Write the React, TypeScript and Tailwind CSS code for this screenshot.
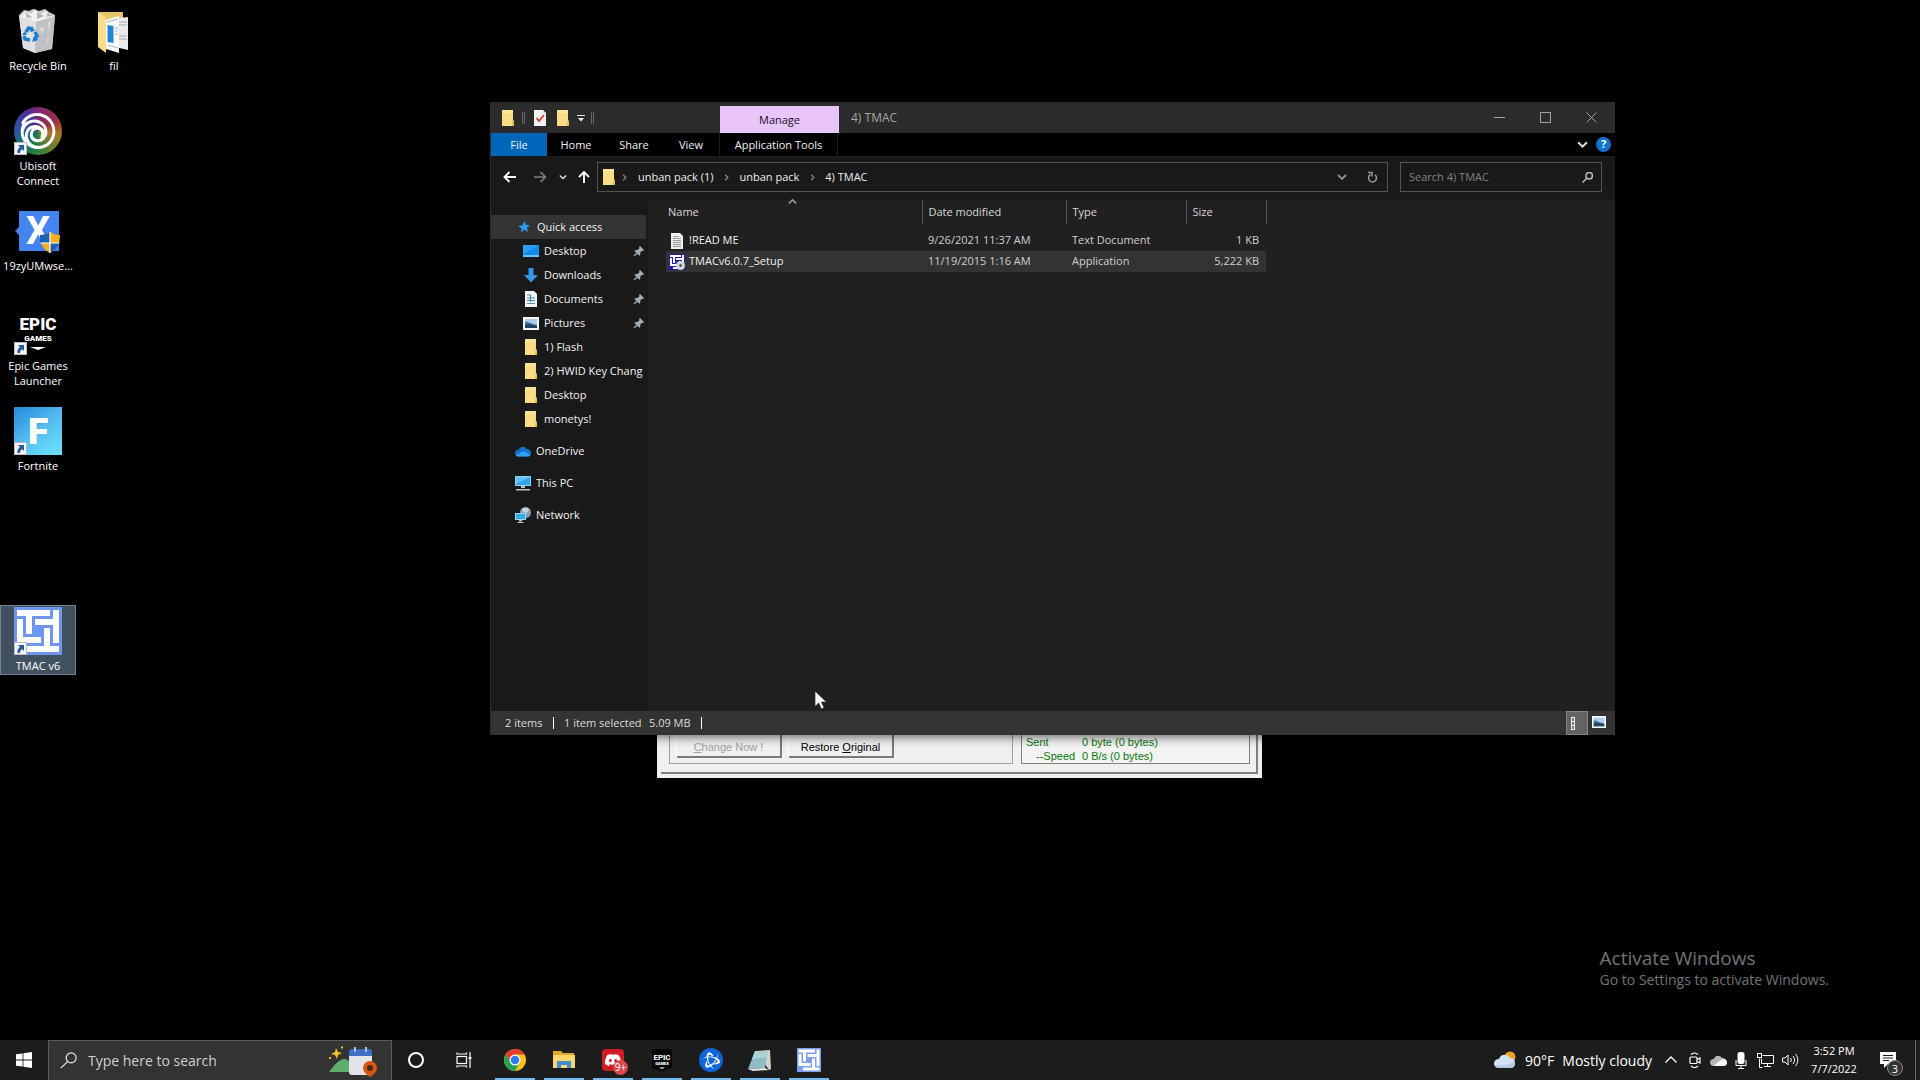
import type { ReactNode } from "react";
import { SiBattledotnet, SiDiscord, SiUbisoft } from "react-icons/si";

/* ---------- shared icons ---------- */

function FolderIcon() {
  return (
    <svg width="16" height="16" viewBox="0 0 16 16" className="shrink-0">
      <path d="M2 0h11v10l1 1v5H2z" fill="#f9dc83" />
      <path d="M2 0h11v3H2z" fill="#fbe59c" />
      <path d="M12.5 10.5 14 11v5h-2z" fill="#e3b94d" />
    </svg>
  );
}

function TmacLogo({ size, bg }: { size: number; bg: string }) {
  return (
    <svg width={size} height={size} viewBox="0 0 48 48" className="shrink-0">
      <rect width="48" height="48" fill={bg} />
      <path
        fill="#fff"
        d="M3 3h33v6H3zM39 3h6v33h-6zM21 12h20v6H21zM12 9h6v18h-6zM3 12h6v24H3zM3 30h24v6H3zM30 21h6v18h-6zM12 39h33v6H12z"
      />
    </svg>
  );
}

function Chevron({ dir, color = "#fff", size = 8 }: { dir: "up" | "down" | "right"; color?: string; size?: number }) {
  const paths = {
    up: "M1 6 5 2l4 4",
    down: "M1 3l4 4 4-4",
    right: "M3 1l4 4-4 4",
  };
  return (
    <svg width={size} height={size} viewBox="0 0 10 10" fill="none" stroke={color} strokeWidth="1.8">
      <path d={paths[dir]} />
    </svg>
  );
}

function PinIcon() {
  return (
    <svg width="12" height="12" viewBox="0 0 12 12" className="shrink-0">
      <path d="M7 1l4 4-1 1-1-.2-1.800 2 .1 2-1 1L1.500 6l1-1 2 .1 2-1.800L6 2z" fill="#a3adb5" />
      <path d="M4 8 1 11" stroke="#a3adb5" strokeWidth="1.300" />
    </svg>
  );
}

function PictureIcon({ small }: { small?: boolean }) {
  return (
    <svg width={small ? 14 : 16} height={small ? 12 : 13} viewBox="0 0 16 13" preserveAspectRatio="none" className="shrink-0">
      <rect width="16" height="13" fill="#f4f6f8" />
      <rect x="2" y="2" width="12" height="9" fill="#a9cdee" />
      <path d="M2 5c3-1 5 2 12 3v3H2z" fill="#3f6f9e" />
      <path d="M2 8c4-1 8 0 12 1v2H2z" fill="#23405c" />
    </svg>
  );
}

function SearchGlyph({ size, color, width }: { size: number; color: string; width: number }) {
  return (
    <svg width={size} height={size} viewBox="0 0 16 16" fill="none" stroke={color} strokeWidth={width}>
      <circle cx="10.500" cy="5.500" r="4.700" />
      <path d="M7 9 .8 15.200" />
    </svg>
  );
}

/* ---------- desktop ---------- */

function ShortcutArrow() {
  return (
    <svg width="13" height="13" viewBox="0 0 13 13" className="absolute bottom-0 left-0">
      <rect width="13" height="13" fill="#b9bcc0" />
      <rect x="1" y="1" width="11" height="11" fill="#f5f6f8" />
      <path d="M4 3h6v6L8.200 7.200C6.500 8.300 6 9.500 6 11H3.500C3 8.500 4 6.500 5.900 5z" fill="#2d5a9e" />
    </svg>
  );
}

function RecycleBin() {
  return (
    <svg width="48" height="48" viewBox="0 0 48 48">
      <path d="M5 8l5-5 5 1 4-2 6 2 6-2 4 3 6 3-3 34-17 4-12-5z" fill="#c6c8ca" />
      <path d="M6 10l5-6 6 3 4-5 5 5 6-3 8 6-8 5-21-1z" fill="#eff1f2" />
      <path d="M5 9l17 6-1 31-12-5z" fill="#dfe1e3" />
      <path d="M22 15l19-6-3 33-17 4z" fill="#bfc1c4" />
      <path d="M11 5l7 5-5 1zM23 5l7 4-7 3zM34 5l4 4-6 1z" fill="#b2b5b8" />
      <path d="M34 15l3-1-2 12zM26 21l4-1-2 8zM33 31l2 0-2 6z" fill="#d7d9db" />
      <g fill="none" stroke="#1c7fd0" strokeWidth="3.500">
        <path d="M12 25l2.500-4 4 1M21 25l2 4-3 4M16 33l-5-1-1-3" />
      </g>
      <path d="M18 19l3 5-5 1zM20 29l-2 6 6-2zM8 28l3-4 2 4z" fill="#1c7fd0" />
    </svg>
  );
}

function FilFolder() {
  return (
    <svg width="48" height="48" viewBox="0 0 48 48">
      <path d="M8 5h25v33H8z" fill="#e8c56b" />
      <path d="M20 12l18-2v33l-13-3z" fill="#e9ebed" />
      <path d="M28 15h9M28 18h9M29 29h8M29 32h8" stroke="#a7aaad" />
      <path d="M16 13l13-4v37l-13-4z" fill="#fafafa" />
      <path d="M17.500 18l6 1v17l-6-1z" fill="#1f86d8" />
      <path d="M17 15l11-3M25 21h3M25 24h3M25 27h3M18 38l10 3" stroke="#a9b5c0" />
      <path d="M8 5l8 6v35l-8-6z" fill="#f8dc8c" />
    </svg>
  );
}

function UbisoftIcon() {
  return (
    <div className="flex size-12 items-center justify-center rounded-full bg-[conic-gradient(#7c2878,#9a3040_60deg,#a87a28_100deg,#5a8030_150deg,#208040_190deg,#1c6a80_240deg,#2a55a0_280deg,#45309a_325deg,#7c2878)]">
      <SiUbisoft size={36} color="#fff" />
    </div>
  );
}

function XSetupIcon() {
  return (
    <svg width="48" height="48" viewBox="0 0 48 48">
      <path d="M1 24l4-4v8z" fill="#6a62d8" />
      <path d="M5 4h40v40H5V28l-2-4 2-4z" fill="#4484ee" />
      <text x="24" y="37" fontSize="38" fontWeight="700" fontFamily="Roboto" textAnchor="middle" fill="#fff">
        X
      </text>
      <path d="M36 25c3 2 6 3 10 3 0 9-3 14-10 18-7-4-10-9-10-18 4 0 7-1 10-3z" fill="#f6b01e" />
      <path d="M36 25c-3 2-6 3-10 3v8h10zM36 36v10c5-3 8-6 9-10z" fill="#1d62b0" />
      <path d="M36 25v21M26.500 36h19" stroke="#fff" strokeWidth="1.200" />
    </svg>
  );
}

function EpicMark() {
  return (
    <svg width="48" height="48" viewBox="0 0 48 48">
      <g fill="#fff" fontFamily="Roboto" textAnchor="middle">
        <text x="24" y="23" fontSize="17" fontWeight="900">EPIC</text>
        <text x="24" y="34" fontSize="8" fontWeight="900">GAMES</text>
      </g>
      <path d="M16 40h16l-8 3z" fill="#fff" />
    </svg>
  );
}

function FortniteIcon() {
  return (
    <svg width="48" height="48" viewBox="0 0 48 48">
      <defs>
        <linearGradient id="fn" x1="0" y1="0" x2="0.700" y2="1">
          <stop offset="0" stopColor="#2489dc" />
          <stop offset="0.600" stopColor="#56c0f0" />
          <stop offset="1" stopColor="#66dcfa" />
        </linearGradient>
      </defs>
      <rect width="48" height="48" fill="url(#fn)" />
      <text x="24" y="37" fontSize="37" fontWeight="900" fontFamily="Roboto" textAnchor="middle" fill="#fff">
        F
      </text>
    </svg>
  );
}

type Shortcut = {
  label: string;
  icon: ReactNode;
  place: string;
  arrow?: boolean;
  selected?: boolean;
};

const shortcuts: Shortcut[] = [
  { label: "Recycle Bin", icon: <RecycleBin />, place: "col-start-1 row-start-1" },
  { label: "fil", icon: <FilFolder />, place: "col-start-2 row-start-1" },
  { label: "Ubisoft Connect", icon: <UbisoftIcon />, place: "col-start-1 row-start-2", arrow: true },
  { label: "19zyUMwse...", icon: <XSetupIcon />, place: "col-start-1 row-start-3" },
  { label: "Epic Games Launcher", icon: <EpicMark />, place: "col-start-1 row-start-4", arrow: true },
  { label: "Fortnite", icon: <FortniteIcon />, place: "col-start-1 row-start-5", arrow: true },
  {
    label: "TMAC v6",
    icon: <TmacLogo size={48} bg="#6f96ee" />,
    place: "col-start-1 row-start-7",
    arrow: true,
    selected: true,
  },
];

function DesktopIcons() {
  return (
    <div className="grid auto-rows-[100px] grid-cols-[76px_76px] items-start pt-[5px]">
      {shortcuts.map((s) => (
        <button
          key={s.label}
          className={`${s.place} flex flex-col items-center border pt-px pb-px ${
            s.selected ? "border-[#74828f] bg-[#42515f]" : "border-transparent"
          }`}
        >
          <span className="relative block size-12">
            {s.icon}
            {s.arrow && <ShortcutArrow />}
          </span>
          <span className="mt-[3px] text-[11px] leading-[15px] text-white">{s.label}</span>
        </button>
      ))}
    </div>
  );
}

/* ---------- TMAC window ---------- */

function TmacWindow() {
  const button =
    "h-6 w-[105px] border-r-2 border-b-2 border-[#7a7a7a] bg-[#f0f0f0] pt-1 text-[11px] shadow-[-1px_-1px_0_#fff]";
  return (
    <section className="absolute top-[700px] left-[657px] w-[605px] bg-[#f0f0f0] px-1 pb-1 font-['Liberation_Sans',sans-serif] text-[11px]">
      <div className="flex border-r-2 border-b-2 border-[#808080] pr-1.5 pb-2 pl-2">
        <div className="flex h-16 w-[344px] items-end gap-[7px] border border-[#a0a0a0] pb-[5px] pl-[7px]">
          <button disabled className={`${button} text-[#a0a0a0]`}>
            <u>C</u>hange Now !
          </button>
          <button className={`${button} text-black`}>
            Restore <u>O</u>riginal
          </button>
        </div>
        <div className="ml-2 flex h-16 flex-1 flex-col justify-end border border-[#808080] bg-[#f4f4f4] pl-1 leading-[14px] text-[#0a780a]">
          <div className="flex">
            <span className="w-14">Sent</span>
            <span>0 byte (0 bytes)</span>
          </div>
          <div className="flex">
            <span className="w-14 pl-2.5">--Speed</span>
            <span>0 B/s (0 bytes)</span>
          </div>
        </div>
      </div>
    </section>
  );
}

/* ---------- explorer ---------- */

function TitleBar() {
  return (
    <div className="flex h-[31px] bg-[#2b2b2b]">
      <div className="flex w-[229px] items-center pl-[9px]">
        <FolderIcon />
        <span className="ml-1.5 h-3 w-[3px] border-x border-[#666]" />
        <button aria-label="Properties" className="ml-2">
          <svg width="14" height="16" viewBox="0 0 14 16">
            <path d="M1 0h9l3 3v13H1z" fill="#f4f4f4" />
            <path d="M3.500 8l2.500 3 5-6" fill="none" stroke="#d8412f" strokeWidth="1.800" />
          </svg>
        </button>
        <button aria-label="New folder" className="ml-2">
          <FolderIcon />
        </button>
        <button aria-label="Customize Quick Access Toolbar" className="ml-1.5">
          <svg width="8" height="8" viewBox="0 0 8 8" fill="#eee">
            <path d="M0 1h8v1H0zM1 4h6L4 7.500z" />
          </svg>
        </button>
        <span className="ml-1.5 h-3 w-[3px] border-x border-[#666]" />
      </div>
      <div className="mt-1 flex w-[119px] items-center justify-center bg-[#e9c6fa] pt-px text-[#1a1022]">Manage</div>
      <div className="flex-1 self-center pl-3 text-[12px] text-[#a6a6a6]">4) TMAC</div>
      {["Minimize", "Maximize", "Close"].map((name) => (
        <button key={name} aria-label={name} className="flex w-[46px] items-center justify-center pr-px">
          <svg width="11" height="11" viewBox="0 0 11 11" fill="none" stroke="#a0a0a0">
            {name === "Minimize" && <path d="M0 5.500h11" />}
            {name === "Maximize" && <rect x=".5" y=".5" width="10" height="10" />}
            {name === "Close" && <path d="M.5.5l10 10M10.500.5l-10 10" />}
          </svg>
        </button>
      ))}
    </div>
  );
}

function RibbonTabs() {
  return (
    <div className="flex h-[23px] bg-black text-[#f0f0f0]">
      <button className="w-14 bg-[#0067b8] pt-px">File</button>
      <button className="w-[58px] pt-px">Home</button>
      <button className="w-[58px] pt-px">Share</button>
      <button className="w-[56px] pt-px">View</button>
      <button className="w-[119px] border-x border-[#1c1c1c] pt-px">Application Tools</button>
      <div className="flex flex-1 items-center justify-end gap-2 pr-1">
        <button aria-label="Expand the Ribbon">
          <Chevron dir="down" size={11} color="#ddd" />
        </button>
        <button
          aria-label="Help"
          className="flex size-[15px] items-center justify-center rounded-full bg-[#1273cc] text-[11px] font-bold text-white"
        >
          ?
        </button>
      </div>
    </div>
  );
}

function AddressRow() {
  return (
    <div className="flex items-center pt-1.5 pr-[13px]">
      <div className="flex w-[106px] items-center pl-3">
        <button aria-label="Back">
          <svg width="14" height="12" viewBox="0 0 14 12" fill="none" stroke="#fff" strokeWidth="1.900">
            <path d="M13 6H2M6.500 1l-5 5 5 5" />
          </svg>
        </button>
        <button aria-label="Forward" className="ml-4">
          <svg width="14" height="12" viewBox="0 0 14 12" fill="none" stroke="#808080" strokeWidth="1.600">
            <path d="M1 6h11M7.500 1l5 5-5 5" />
          </svg>
        </button>
        <button aria-label="Recent locations" className="ml-3">
          <Chevron dir="down" color="#ddd" size={8} />
        </button>
        <button aria-label="Up" className="ml-[11px]">
          <svg width="12" height="14" viewBox="0 0 12 14" fill="none" stroke="#fff" strokeWidth="1.900">
            <path d="M6 13V2M1 7l5-5 5 5" />
          </svg>
        </button>
      </div>
      <div className="flex h-[30px] flex-1 items-center border border-[#535353] pl-[3px] text-[#eee]">
        <FolderIcon />
        {["unban pack (1)", "unban pack", "4) TMAC"].map((crumb, i) => (
          <span key={crumb} className="flex items-center">
            <span className={i === 0 ? "mr-2.5 ml-1" : "mr-[9px] ml-2.5"}>
              <Chevron dir="right" color="#888" size={7} />
            </span>
            <button>{crumb}</button>
          </span>
        ))}
        <span className="flex-1" />
        <button aria-label="Previous locations" className="mr-5">
          <Chevron dir="down" color="#909090" size={10} />
        </button>
        <button aria-label="Refresh" className="mr-[9px]">
          <svg width="11" height="12" viewBox="0 0 11 12" fill="none" stroke="#999" strokeWidth="1.500">
            <path d="M3.500 3.500A4 4 0 1 0 8 3.800M1 1.500h4v4" />
          </svg>
        </button>
      </div>
      <div className="ml-3 flex h-[30px] w-[202px] items-center border border-[#535353] pr-2">
        <input
          type="text"
          aria-label="Search 4) TMAC"
          placeholder="Search 4) TMAC"
          className="min-w-0 flex-1 bg-transparent pl-2 text-[11px] outline-none placeholder:text-[#808080]"
        />
        <SearchGlyph size={11} color="#bbb" width={2.2} />
      </div>
    </div>
  );
}

const pinned: { label: string; icon: ReactNode; pin?: boolean }[] = [
  {
    label: "Desktop",
    pin: true,
    icon: (
      <svg width="16" height="12" viewBox="0 0 16 12">
        <rect width="16" height="12" fill="#0f8ae6" />
        <path d="M0 10h16v2H0z" fill="#6cc4ff" />
        <path d="M0 0h16L0 9z" fill="#27a0f5" />
      </svg>
    ),
  },
  {
    label: "Downloads",
    pin: true,
    icon: (
      <svg width="16" height="16" viewBox="0 0 16 16">
        <path d="M5.500 1h5v7H15l-7 7.500L1 8h4.500z" fill="#3494e6" />
      </svg>
    ),
  },
  {
    label: "Documents",
    pin: true,
    icon: (
      <svg width="16" height="16" viewBox="0 0 16 16">
        <path d="M2 0h9l3 3v13H2z" fill="#f2f5f7" />
        <path d="M4 4h4M4 7h8M4 9.500h8M4 12.500h8" stroke="#4f8fb5" />
        <path d="M7 4h1v7H7z" fill="#2f7da8" />
      </svg>
    ),
  },
  { label: "Pictures", pin: true, icon: <PictureIcon /> },
  { label: "1) Flash", icon: <FolderIcon /> },
  { label: "2) HWID Key Chang", icon: <FolderIcon /> },
  { label: "Desktop", icon: <FolderIcon /> },
  { label: "monetys!", icon: <FolderIcon /> },
];

const places: { label: string; icon: ReactNode }[] = [
  {
    label: "OneDrive",
    icon: (
      <svg width="16" height="11" viewBox="0 0 16 11">
        <path d="M4 3.500C5 .5 9.500-.5 11.500 3 14.500 3 16 5 16 7c0 2-1.500 3.500-3.500 3.500h-9C1.500 10.500 0 9 0 7c0-2 1.500-3.500 4-3.500z" fill="#1572c8" />
        <path d="M1 9l8-4 6.500 4c-.8 1-1.800 1.500-3 1.500h-9C2.500 10.500 1.600 10 1 9z" fill="#2fa0f0" />
      </svg>
    ),
  },
  {
    label: "This PC",
    icon: (
      <svg width="16" height="15" viewBox="0 0 16 15">
        <rect width="16" height="10" fill="#8fd0f2" />
        <rect x="1" y="1" width="14" height="8" fill="#33a4e4" />
        <path d="M1 1h14L1 8z" fill="#62c2f4" />
        <path d="M6 10h4v2H6zM1 13h14v1.500H1z" fill="#b9c4cc" />
      </svg>
    ),
  },
  {
    label: "Network",
    icon: (
      <svg width="16" height="16" viewBox="0 0 16 16">
        <circle cx="10.500" cy="5.500" r="5.500" fill="#7f9fb2" />
        <path d="M7 2c3-2 5-1 7 0l-2 4-4-1z" fill="#c4d5df" />
        <rect y="6" width="11" height="7" fill="#9ad8f8" />
        <rect x="1" y="7" width="9" height="5" fill="#36a7e8" />
        <path d="M4 13h3v1.500H4zM2.500 15h6v1h-6z" fill="#b9c4cc" />
      </svg>
    ),
  },
];

function Sidebar() {
  return (
    <nav className="w-[157px] shrink-0 overflow-hidden whitespace-nowrap text-[#f2f2f2]">
      <button className="mt-[15px] flex h-6 w-[155px] items-center gap-[7px] bg-[#333] pl-[27px]">
        <svg width="12" height="12" viewBox="0 0 12 12">
          <path d="M6.500 0 8 3.800l4 .4-3 2.500 1 4.300-3.600-2.200L3 11.500l.6-4L0 5l4.300-.6z" fill="#2b9bea" />
        </svg>
        Quick access
      </button>
      {pinned.map((item, i) => (
        <button key={i} className="flex h-6 w-full items-center pr-[3px] pl-8 text-left">
          <span className="flex w-[21px] shrink-0">{item.icon}</span>
          <span className="flex-1">{item.label}</span>
          {item.pin && <PinIcon />}
        </button>
      ))}
      {places.map((item) => (
        <button key={item.label} className="mt-2 flex h-6 w-full items-center gap-[5px] pl-6">
          {item.icon}
          {item.label}
        </button>
      ))}
    </nav>
  );
}

const files = [
  { name: "!READ ME", date: "9/26/2021 11:37 AM", type: "Text Document", size: "1 KB" },
  { name: "TMACv6.0.7_Setup", date: "11/19/2015 1:16 AM", type: "Application", size: "5,222 KB", selected: true },
];

function FileList() {
  const head = "border-r border-[#5a5a5a] pl-1.5 font-normal";
  return (
    <div className="flex-1 bg-[#202020] pl-[18px]">
      <table className="w-[600px] table-fixed border-collapse text-left">
        <colgroup>
          <col className="w-[256px]" />
          <col className="w-[144px]" />
          <col className="w-[120px]" />
          <col className="w-[80px]" />
        </colgroup>
        <thead className="text-[#d8d8d8]">
          <tr className="h-6">
            <th className="relative border-r border-[#5a5a5a] pl-0.5 font-normal">
              Name
              <span className="absolute -top-0.5 left-[122px]">
                <Chevron dir="up" color="#999" size={9} />
              </span>
            </th>
            <th className={head}>Date modified</th>
            <th className={head}>Type</th>
            <th className={head}>Size</th>
          </tr>
        </thead>
        <tbody className="text-[#d0d0d0]">
          <tr className="h-1.5" />
          {files.map((f) => (
            <tr key={f.name} className={`h-[21px] ${f.selected ? "bg-[#333]" : ""}`}>
              <td>
                <span className="flex items-center gap-1 pl-[3px] text-[#f0f0f0]">
                  {f.selected ? (
                    <span className="relative">
                      <TmacLogo size={16} bg="#1d1da8" />
                      <svg width="9" height="9" viewBox="0 0 9 9" className="absolute right-0 bottom-0">
                        <circle cx="4.500" cy="4.500" r="4.500" fill="#cfd8d6" />
                        <circle cx="4.500" cy="4.500" r="1.200" fill="#333" />
                      </svg>
                    </span>
                  ) : (
                    <svg width="16" height="16" viewBox="0 0 16 16">
                      <path d="M2 0h9l3 3v13H2z" fill="#f0f0f0" />
                      <path d="M4 3.500h6M4 5.500h8M4 7.500h8M4 9.500h8M4 11.500h8M4 13.500h8" stroke="#9a9a9a" />
                    </svg>
                  )}
                  {f.name}
                </span>
              </td>
              <td className="pl-1.5">{f.date}</td>
              <td className="pl-1.5">{f.type}</td>
              <td className="pr-[7px] text-right">{f.size}</td>
            </tr>
          ))}
        </tbody>
      </table>
    </div>
  );
}

function StatusBar() {
  return (
    <footer className="flex h-6 items-center bg-[#333] pl-3.5 text-[#dcdcdc]">
      <span className="w-12">2 items</span>
      <span className="h-3 w-px bg-white" />
      <span className="ml-2.5 w-[75px] whitespace-nowrap">1 item selected</span>
      <span className="ml-2.5 w-[52px] whitespace-nowrap">5.09 MB</span>
      <span className="h-3 w-px bg-white" />
      <span className="flex-1" />
      <button aria-label="Details view" className="flex h-full w-[22px] items-center border border-[#848484] bg-[#636363] pl-1">
        <svg width="4" height="13" viewBox="0 0 4 13">
          <path d="M0 0h4v13H0z" fill="#f0f0f0" />
          <path d="M1 1h2v3H1zM1 5h2v3H1zM1 9h2v3H1z" fill="#777" />
        </svg>
      </button>
      <button aria-label="Large icons view" className="mr-[9px] mb-0.5 ml-1">
        <PictureIcon small />
      </button>
    </footer>
  );
}

function ExplorerWindow() {
  return (
    <main className="absolute top-[102px] left-[490px] flex h-[633px] w-[1125px] flex-col border-l border-[#2e2e2e] bg-[#191919] text-[11px] shadow-[0_2px_10px_rgba(0,0,0,0.6)]">
      <TitleBar />
      <RibbonTabs />
      <AddressRow />
      <div className="mt-2 flex min-h-0 flex-1">
        <Sidebar />
        <FileList />
      </div>
      <StatusBar />
    </main>
  );
}

/* ---------- taskbar ---------- */

function SearchArt() {
  return (
    <svg width="50" height="32" viewBox="0 0 50 32">
      <path d="M0 27C6 19 11 14 15 14c5 0 8 5 10 13z" fill="#5fae6e" />
      <path d="M7 3l2 4 4 1-4 2-1 4-2-4-4-1 4-2z" fill="#f0c419" />
      <path d="M12 1.500h2v2h-2zM0 12h2v2H0z" fill="#f0c419" />
      <path d="M20 9h23v18a3 3 0 0 1-3 3H23a3 3 0 0 1-3-3z" fill="#e2e4ea" />
      <path d="M20 11V7a3 3 0 0 1 3-3h17a3 3 0 0 1 3 3v4z" fill="#3f6fc4" />
      <path d="M26 2v5M37 2v5" stroke="#a9c2ee" strokeWidth="2" />
      <path d="M41 16a7 7 0 0 1 7 7c0 4-4 7-7 9-3-2-7-5-7-9a7 7 0 0 1 7-7z" fill="#d8560f" />
      <circle cx="41" cy="23" r="3" fill="#4a2a20" />
    </svg>
  );
}

const apps: { name: string; icon: ReactNode }[] = [
  {
    name: "Google Chrome",
    icon: (
      <svg width="22" height="22" viewBox="-11 -11 22 22">
        <circle r="11" fill="#fbc116" />
        <path d="M-9.500-5.500A11 11 0 0 1 9.500-5.500H0L-4.500 2.500z" fill="#e33b2e" />
        <path d="M-9.500-5.500A11 11 0 0 0 0 11L4.500 2.500l-9 0z" fill="#23a152" />
        <circle r="5.500" fill="#fff" />
        <circle r="4.300" fill="#2f7cf0" />
      </svg>
    ),
  },
  {
    name: "File Explorer",
    icon: (
      <svg width="22" height="20" viewBox="0 0 22 20">
        <path d="M0 1h8l2 2h11v5H0z" fill="#e0a92e" />
        <path d="M0 5h22v13H0z" fill="#fbd66b" />
        <path d="M4 18v-7h14v7h-4v-3H8v3z" fill="#3f8fd2" />
      </svg>
    ),
  },
  {
    name: "Discord",
    icon: (
      <span className="relative flex size-[22px] items-center justify-center rounded-sm bg-[#d01c24]">
        <SiDiscord size={16} color="#fff" />
        <span className="absolute -right-1 -bottom-1 flex size-[15px] items-center justify-center rounded-full bg-[#d9494c] text-[10px] text-white">
          9+
        </span>
      </span>
    ),
  },
  {
    name: "Epic Games Launcher",
    icon: (
      <svg width="20" height="22" viewBox="0 0 20 22">
        <path d="M0 0h20v19l-10 3-10-3z" fill="#050505" />
        <g fill="#fff" fontFamily="Roboto" textAnchor="middle">
          <text x="10" y="11" fontSize="8" fontWeight="700">EPIC</text>
          <text x="10" y="16" fontSize="4" fontWeight="900">GAMES</text>
        </g>
        <path d="M7 18.500h6l-3 1.500z" fill="#fff" />
      </svg>
    ),
  },
  {
    name: "Battle.net",
    icon: (
      <span className="flex size-6 items-center justify-center rounded-full bg-[#0d66d8]">
        <SiBattledotnet size={17} color="#fff" />
      </span>
    ),
  },
  {
    name: "Notepad",
    icon: (
      <svg width="24" height="22" viewBox="0 0 24 22">
        <path d="M8 2l14-1 1 19-2 1z" fill="#d6d2c4" />
        <path d="M7 2h13l-3 17-17 1z" fill="#8ebcc4" />
        <path d="M7 2h13l-1 6-15 2z" fill="#acd2d6" />
        <path d="M0 20l17-1 4 2-16 1z" fill="#e6e8e6" />
      </svg>
    ),
  },
  { name: "TMAC v6", icon: <TmacLogo size={24} bg="#7d9fec" /> },
];

function Tray() {
  return (
    <div className="flex items-center gap-2 text-white">
      <button aria-label="Show hidden icons">
        <svg width="14" height="14" viewBox="0 0 14 14" fill="none" stroke="#fff" strokeWidth="1.300">
          <path d="M1.500 9.500 7 4l5.500 5.500" />
        </svg>
      </button>
      <button aria-label="Meet Now" className="ml-0.5">
        <svg width="14" height="16" viewBox="0 0 14 16" fill="none" stroke="#fff" strokeWidth="1.200">
          <rect x="2" y="5" width="7" height="6.500" rx="1" />
          <path d="M9 7.500 12 6v5L9 9.500M3 2.500C5 .5 8 .5 10 2.500M3 14c2 2 5 2 7 0" />
        </svg>
      </button>
      <button aria-label="OneDrive">
        <svg width="17" height="11" viewBox="0 0 17 11">
          <path d="M4 4C5 .5 9.500-.5 12 3c3 0 5 2 5 4.500 0 2-1.500 3.500-3.500 3.500h-10C1.500 11 0 9.500 0 7.500S1.500 4 4 4z" fill="#b7b7b7" />
          <path d="M4 10.500 11 5c3-2 6 0 6 2.500 0 2-1.500 3.500-3.500 3.500h-10z" fill="#f6f6f6" />
        </svg>
      </button>
      <button aria-label="Microphone">
        <svg width="12" height="17" viewBox="0 0 12 17" fill="none" stroke="#fff">
          <rect x="3" y=".5" width="6" height="11" rx="1.500" fill="#fff" />
          <path d="M1 8v5.500h10V8M6 13.500V16M3 16.500h6" />
        </svg>
      </button>
      <button aria-label="Network" className="ml-0.5">
        <svg width="17" height="15" viewBox="0 0 17 15" fill="none" stroke="#fff">
          <path d="M5.500 2.500h11v8H4.500v-5M10.500 10.500v3M7 13.500h7M2.500 5.500v9h3" />
          <rect x=".5" y=".5" width="4" height="4" />
        </svg>
      </button>
      <button aria-label="Volume">
        <svg width="17" height="14" viewBox="0 0 17 14" fill="none" stroke="#fff">
          <path d="M.5 5v4h2.500l3 3V2L3 5zM8.500 5c1 1.200 1 2.800 0 4M11 3c2 2.300 2 5.700 0 8M13.500 1c3 3.400 3 8.600 0 12" />
        </svg>
      </button>
    </div>
  );
}

function Taskbar() {
  return (
    <footer className="flex h-10 shrink-0 bg-[#1c1c1c] text-white">
      <button aria-label="Start" className="flex w-12 items-center justify-center">
        <svg width="16" height="16" viewBox="0 0 16 16" fill="#fff">
          <path d="M0 2.300 6.600 1.400v6.200H0zM7.400 1.300 16 0v7.600H7.400zM0 8.400h6.600v6.200L0 13.700zM7.400 8.400H16V16l-8.600-1.300z" />
        </svg>
      </button>
      <div className="flex w-[344px] items-center border border-b-0 border-[#5c5c5c] bg-[#333] pr-3 pl-[11px]">
        <SearchGlyph size={17} color="#eee" width={1.1} />
        <input
          type="text"
          aria-label="Type here to search"
          placeholder="Type here to search"
          className="min-w-0 flex-1 bg-transparent pl-[11px] text-[14px] outline-none placeholder:text-[#d0d0d0]"
        />
        <SearchArt />
      </div>
      <button aria-label="Cortana" className="flex w-12 items-center justify-center">
        <span className="size-4 rounded-full border-2 border-white" />
      </button>
      <button aria-label="Task View" className="mr-[3px] flex w-12 items-center justify-center">
        <svg width="16" height="16" viewBox="0 0 16 16" fill="none" stroke="#fff" strokeWidth="1.200">
          <rect x="1" y="4.500" width="9.500" height="7" />
          <path d="M1 .5V2h9.500V.5M1 15.500V14h9.500v1.500M14 0v4M14 8v8" />
          <path d="M12.700 4.500h2.600v3h-2.600z" fill="#fff" stroke="none" />
        </svg>
      </button>
      <div className="flex gap-px">
        {apps.map((app) => (
          <button
            key={app.name}
            aria-label={app.name}
            className="relative flex w-12 items-center justify-center"
          >
            {app.icon}
            <span className="absolute inset-x-1 bottom-0 h-0.5 bg-[#76b9ed]" />
          </button>
        ))}
      </div>
      <span className="flex-1" />
      <button className="mr-3 flex items-center gap-2 text-[14px] whitespace-nowrap">
        <svg width="23" height="18" viewBox="0 0 23 18">
          <circle cx="16" cy="6" r="5.500" fill="#f5a020" />
          <path d="M5 8c1-5 9-6 11-1 4 0 5 3 5 5 0 3-2 5-5 5H5c-3 0-5-2-5-4.500S2 8 5 8z" fill="#d3e2f5" />
          <path d="M1 14c6 1 13 0 20-3 .5 4-2 6-5 6H5c-2 0-3-1-4-3z" fill="#b4cbe8" />
        </svg>
        <span>90°F</span>
        <span>Mostly cloudy</span>
      </button>
      <Tray />
      <button className="ml-2 w-[54px] text-center text-[11px] leading-[18px]">
        3:52 PM
        <br />
        7/7/2022
      </button>
      <button aria-label="3 new notifications" className="relative flex w-[54px] items-center justify-center">
        <svg width="16" height="16" viewBox="0 0 16 16">
          <path d="M0 0h16v12H8l-4 4v-4H0z" fill="#fff" />
          <path d="M3 3.500h10M3 6h10M3 8.500h6" stroke="#1c1c1c" />
        </svg>
        <span className="absolute right-3 bottom-1 flex size-4 items-center justify-center rounded-full border border-[#8a8a8a] bg-[#333] text-[11px] leading-none">
          3
        </span>
      </button>
      <button aria-label="Show desktop" className="w-[5px] border-l border-[#6a6a6a]" />
    </footer>
  );
}

export default function App() {
  return (
    <div className="flex h-screen flex-col overflow-hidden bg-black font-['Open_Sans','Noto_Sans',sans-serif]">
      <div className="relative min-h-0 flex-1">
        <DesktopIcons />
        <TmacWindow />
        <ExplorerWindow />
        <div className="absolute right-[91px] bottom-[50px] text-[#737373]">
          <p className="text-[19px] leading-6">Activate Windows</p>
          <p className="text-[14px] leading-5">Go to Settings to activate Windows.</p>
        </div>
        <svg width="13" height="20" viewBox="0 0 13 20" className="absolute top-[690px] left-[814px]">
          <path d="M1 1v15.500l3.800-3.600L7.300 19l2.700-1.200-2.500-5.700h5z" fill="#fff" stroke="#222" strokeWidth=".7" />
        </svg>
      </div>
      <Taskbar />
    </div>
  );
}
